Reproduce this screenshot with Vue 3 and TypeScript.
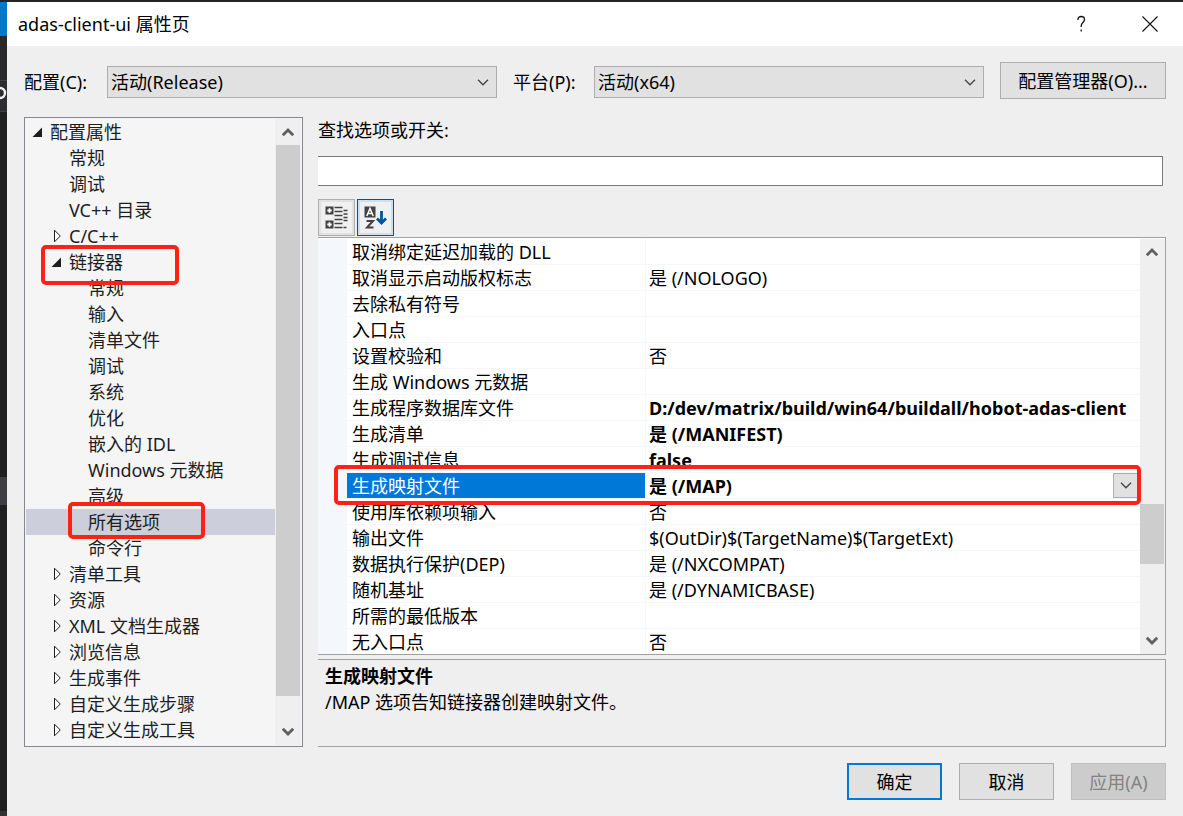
<script setup lang="ts">
import { ref } from 'vue'

interface TreeNode {
  label: string
  level: 0 | 1 | 2
  state?: 'open' | 'closed'
  marked?: 'wide' | 'inset'
}

interface Option {
  name: string
  value?: string
  changed?: boolean
}

const nodes: TreeNode[] = [
  { label: '配置属性', level: 0, state: 'open' },
  { label: '常规', level: 1 },
  { label: '调试', level: 1 },
  { label: 'VC++ 目录', level: 1 },
  { label: 'C/C++', level: 1, state: 'closed' },
  { label: '链接器', level: 1, state: 'open', marked: 'wide' },
  { label: '常规', level: 2 },
  { label: '输入', level: 2 },
  { label: '清单文件', level: 2 },
  { label: '调试', level: 2 },
  { label: '系统', level: 2 },
  { label: '优化', level: 2 },
  { label: '嵌入的 IDL', level: 2 },
  { label: 'Windows 元数据', level: 2 },
  { label: '高级', level: 2 },
  { label: '所有选项', level: 2, marked: 'inset' },
  { label: '命令行', level: 2 },
  { label: '清单工具', level: 1, state: 'closed' },
  { label: '资源', level: 1, state: 'closed' },
  { label: 'XML 文档生成器', level: 1, state: 'closed' },
  { label: '浏览信息', level: 1, state: 'closed' },
  { label: '生成事件', level: 1, state: 'closed' },
  { label: '自定义生成步骤', level: 1, state: 'closed' },
  { label: '自定义生成工具', level: 1, state: 'closed' },
]

const options: Option[] = [
  { name: '取消绑定延迟加载的 DLL' },
  { name: '取消显示启动版权标志', value: '是 (/NOLOGO)' },
  { name: '去除私有符号' },
  { name: '入口点' },
  { name: '设置校验和', value: '否' },
  { name: '生成 Windows 元数据' },
  { name: '生成程序数据库文件', value: 'D:/dev/matrix/build/win64/buildall/hobot-adas-client', changed: true },
  { name: '生成清单', value: '是 (/MANIFEST)', changed: true },
  { name: '生成调试信息', value: 'false', changed: true },
  { name: '生成映射文件', value: '是 (/MAP)', changed: true },
  { name: '使用库依赖项输入', value: '否' },
  { name: '输出文件', value: '$(OutDir)$(TargetName)$(TargetExt)' },
  { name: '数据执行保护(DEP)', value: '是 (/NXCOMPAT)' },
  { name: '随机基址', value: '是 (/DYNAMICBASE)' },
  { name: '所需的最低版本' },
  { name: '无入口点', value: '否' },
]

const activeNode = ref(15)
const activeOption = ref(9)
const config = ref('活动(Release)')
const platform = ref('活动(x64)')
const query = ref('')
</script>

<template>
  <div class="desktop">
    <div class="backdrop" aria-hidden="true">
      <i class="seg accent"></i>
      <i class="seg tabs"></i>
      <i class="seg word">
        <svg width="7" height="16" viewBox="0 0 7 16"><circle cx="0" cy="8" r="5" fill="none" stroke="#f1f1f1" stroke-width="2.4" /></svg>
      </i>
      <i class="seg upper"></i>
      <i class="seg handle"></i>
      <i class="seg lower"></i>
    </div>

    <main class="dialog">
      <header class="titlebar">
        <h1>adas-client-ui 属性页</h1>
        <button type="button" class="caption" aria-label="帮助">
          <svg width="16" height="18" viewBox="0 0 16 18"><path d="M4 5V4C4 2.500 5.300 1.500 7.200 1.500s3.300 1 3.300 3c0 3-3.300 3.200-3.300 6.500v1M7.200 14.500v2" fill="none" stroke="#111" stroke-width="1.300" /></svg>
        </button>
        <button type="button" class="caption" aria-label="关闭">
          <svg width="16" height="16" viewBox="0 0 16 16"><path d="M.5.5l15 15M15.500.5l-15 15" stroke="#111" stroke-width="1.100" /></svg>
        </button>
      </header>

      <div class="content">
        <div class="config-row">
          <label class="config-label" for="config">配置(C):</label>
          <div class="combo">
            <select id="config" v-model="config"><option>活动(Release)</option></select>
            <svg class="chevron" width="12" height="7" viewBox="0 0 12 7"><path d="M1 .8l5 5 5-5" fill="none" stroke="#444" stroke-width="1.3" /></svg>
          </div>
          <label class="config-label second" for="platform">平台(P):</label>
          <div class="combo">
            <select id="platform" v-model="platform"><option>活动(x64)</option></select>
            <svg class="chevron" width="12" height="7" viewBox="0 0 12 7"><path d="M1 .8l5 5 5-5" fill="none" stroke="#444" stroke-width="1.3" /></svg>
          </div>
          <button type="button" class="btn manager">配置管理器(O)...</button>
        </div>

        <div class="panes">
          <nav class="tree">
            <ul>
              <li
                v-for="(node, i) in nodes"
                :key="i"
                :class="['node', `level-${node.level}`, { active: i === activeNode }]"
                @click="activeNode = i"
              >
                <span class="toggle">
                  <svg v-if="node.state === 'open'" width="14" height="14" viewBox="0 0 14 14"><path d="M11 2.500V12H1.500z" fill="#1e1e1e" /></svg>
                  <svg v-else-if="node.state === 'closed'" width="14" height="14" viewBox="0 0 14 14"><path d="M4.500 1.200v11.600L10.300 7z" fill="#fff" stroke="#1e1e1e" /></svg>
                </span>
                <span>{{ node.label }}</span>
                <span v-if="node.marked" :class="['mark', node.marked]"></span>
              </li>
            </ul>
            <div class="scroll tree-scroll">
              <button type="button" class="step" aria-label="向上滚动">
                <svg width="12" height="10" viewBox="0 0 12 10"><path d="M.8 8.200L6 3l5.200 5.200" fill="none" stroke="#606060" stroke-width="2.800" /></svg>
              </button>
              <div class="track tree-track"><div class="thumb"></div></div>
              <button type="button" class="step" aria-label="向下滚动">
                <svg width="12" height="10" viewBox="0 0 12 10"><path d="M.8 1.800L6 7l5.200-5.200" fill="none" stroke="#606060" stroke-width="2.800" /></svg>
              </button>
            </div>
          </nav>

          <section class="details">
            <label class="search-label" for="search">查找选项或开关:</label>
            <input id="search" v-model="query" class="search" type="text" />

            <div class="toolbar">
              <button type="button" class="tool" aria-label="按类别">
                <svg width="24" height="24" viewBox="0 0 24 24">
                  <path d="M.5.5h8v8h-8zM.5 14.500h8v8h-8z" fill="#424242" />
                  <path d="M4.500 2.300v4.400M2.300 4.500h4.400M4.500 16.300v4.400M2.300 18.500h4.400" stroke="#fff" stroke-width="1.800" />
                  <path d="M9.500 1.500h8M9.500 5.500h8M9.500 9.500h8M9.500 13.500h8M9.500 17.500h8M9.500 21.500h8M18.500 4.500h4M18.500 8h4M18.500 11.500h4M18.500 14.500h4M18.500 21.500h3" stroke="#424242" stroke-width="1.500" />
                </svg>
              </button>
              <button type="button" class="tool pressed" aria-label="按字母顺序">
                <svg width="24" height="24" viewBox="0 0 24 24">
                  <path d="M.5.5h11v11H.5z" fill="#424242" />
                  <path d="M2.800 10L6 2.500 9.200 10M4 7.500h4" fill="none" stroke="#fff" stroke-width="1.500" />
                  <path d="M2.500 15h6.500L3 21.500h6.500" fill="none" stroke="#424242" stroke-width="2" />
                  <path d="M17.500 5v12M13 12.500l4.500 4.500 4.500-4.500" fill="none" stroke="#00539c" stroke-width="2.800" />
                </svg>
              </button>
            </div>

            <div class="grid">
              <table>
                <colgroup><col class="gutter-col" /><col class="name-col" /><col /></colgroup>
                <tbody>
                  <tr
                    v-for="(option, i) in options"
                    :key="option.name"
                    :class="{ active: i === activeOption }"
                    @click="activeOption = i"
                  >
                    <td class="gutter"><span v-if="i === 9" class="mark row-mark"></span></td>
                    <th scope="row"><span class="cell-text">{{ option.name }}</span></th>
                    <td :class="['value', { changed: option.changed }]">
                      <div class="cell">
                        <span class="cell-text">{{ option.value }}</span>
                        <button v-if="i === activeOption" type="button" class="drop" aria-label="打开选项">
                          <svg width="12" height="7" viewBox="0 0 12 7"><path d="M1 .8l5 5 5-5" fill="none" stroke="#444" stroke-width="1.3" /></svg>
                        </button>
                      </div>
                    </td>
                  </tr>
                </tbody>
              </table>
              <div class="scroll grid-scroll">
                <button type="button" class="step" aria-label="向上滚动">
                  <svg width="12" height="10" viewBox="0 0 12 10"><path d="M.8 8.200L6 3l5.200 5.200" fill="none" stroke="#606060" stroke-width="2.800" /></svg>
                </button>
                <div class="track grid-track"><div class="thumb"></div></div>
                <button type="button" class="step" aria-label="向下滚动">
                  <svg width="12" height="10" viewBox="0 0 12 10"><path d="M.8 1.800L6 7l5.200-5.200" fill="none" stroke="#606060" stroke-width="2.800" /></svg>
                </button>
              </div>
            </div>

            <div class="help">
              <h2>生成映射文件</h2>
              <p>/MAP 选项告知链接器创建映射文件。</p>
            </div>
          </section>
        </div>

        <footer class="actions">
          <button type="button" class="btn primary">确定</button>
          <button type="button" class="btn">取消</button>
          <button type="button" class="btn" disabled>应用(A)</button>
        </footer>
      </div>
    </main>
  </div>
</template>

<style>
body {
  margin: 0;
  background: #efefef;
}
</style>

<style scoped>
* {
  box-sizing: border-box;
}
.desktop {
  display: flex;
  min-height: 100vh;
  padding-top: 2px;
  background: #252526;
  color: #000;
  font: 18px/26px "Noto Sans", "Noto Sans CJK SC", sans-serif;
}
button,
select,
input {
  margin: 0;
  font: inherit;
  color: inherit;
  border-radius: 0;
}
svg {
  display: block;
}
h1,
h2,
p,
ul {
  margin: 0;
  padding: 0;
  font-size: 18px;
  font-weight: 400;
}

.backdrop {
  display: flex;
  flex-direction: column;
  flex: 0 0 7px;
  overflow: hidden;
}
.seg {
  display: block;
}
.accent {
  height: 34px;
  background: #0078cc;
}
.tabs {
  height: 44px;
  background: #29292c;
}
.word {
  height: 32px;
  padding-top: 4px;
  background: #2d2d30;
  border-top: 1px solid #3f3f46;
  border-bottom: 1px solid #3f3f46;
}
.upper {
  flex: 368;
  background: #1f1f1f;
}
.handle {
  flex: 28;
  background: #3e3e42;
}
.lower {
  flex: 308;
  background: #1f1f1f;
  border-bottom: 5px solid #333337;
}

.dialog {
  display: flex;
  flex-direction: column;
  flex: 1;
  min-width: 0;
  background: #efefef;
}
.titlebar {
  display: flex;
  align-items: center;
  height: 44px;
  padding-left: 11px;
  background: #fff;
}
.titlebar h1 {
  flex: 1;
}
.caption {
  display: grid;
  place-items: center;
  width: 70px;
  height: 44px;
  padding: 0;
  border: 0;
  background: none;
}
.caption:last-child {
  width: 66px;
}

.content {
  display: flex;
  flex-direction: column;
  flex: 1;
  padding: 16px 17px;
}
.config-row {
  display: flex;
  align-items: flex-end;
}
.config-label {
  flex: 0 0 83px;
  line-height: 34px;
}
.second {
  padding-left: 16px;
  flex-basis: 97px;
}
.combo {
  display: grid;
  flex: 1;
  align-items: center;
  height: 34px;
}
.combo > * {
  grid-area: 1 / 1;
}
.combo select {
  width: 100%;
  height: 32px;
  padding: 0 28px 0 3px;
  border: 1px solid #adadad;
  background: #e1e1e1;
  appearance: none;
}
.chevron {
  justify-self: end;
  margin-right: 8px;
  pointer-events: none;
}
.btn {
  width: 95px;
  height: 37px;
  padding: 0;
  border: 1px solid #adadad;
  background: #e1e1e1;
}
.manager {
  width: 166px;
  margin-left: 16px;
}
.primary {
  border: 2px solid #0078d7;
}
.btn:disabled {
  border-color: #bfbfbf;
  background: #ccc;
  color: #838383;
}

.panes {
  display: flex;
  flex: 1;
  gap: 15px;
  margin: 18px 0 16px;
}
.tree {
  display: flex;
  flex: 0 0 279px;
  padding: 1px;
  border: 1px solid #828790;
  background: #f5f5f5;
  color: #1e1e1e;
}
.tree ul {
  flex: 1;
  list-style: none;
}
.node {
  position: relative;
  display: flex;
  height: 26px;
  white-space: nowrap;
  cursor: default;
}
.node.active {
  background: #cccedb;
}
.level-0 {
  padding-left: 5px;
}
.level-1 {
  padding-left: 24px;
}
.level-2 {
  padding-left: 43px;
}
.toggle {
  display: flex;
  align-items: center;
  flex: 0 0 19px;
}
.mark {
  position: absolute;
  z-index: 2;
  border: 4px solid #ff2114;
  border-radius: 5px;
  pointer-events: none;
}
.wide {
  top: -4px;
  left: 15px;
  width: 138px;
  height: 40px;
}
.inset {
  top: -7px;
  left: 42px;
  width: 137px;
  height: 37px;
}

.scroll {
  display: flex;
  flex-direction: column;
  background: #efefef;
}
.tree-scroll {
  flex: 0 0 26px;
  padding: 0 1px;
}
.grid-scroll {
  flex: 0 0 25px;
}
.step {
  display: grid;
  place-items: center;
  width: 24px;
  height: 26px;
  padding: 0;
  border: 0;
  background: none;
}
.track {
  display: flex;
  flex-direction: column;
  flex: 1;
}
.thumb {
  width: 24px;
  background: #cdcdcd;
}
.tree-track .thumb {
  flex: 0 0 96%;
}
.grid-track {
  justify-content: flex-end;
  padding-bottom: 64px;
}
.grid-track .thumb {
  height: 60px;
}

.details {
  display: flex;
  flex-direction: column;
  flex: 1;
  min-width: 0;
}
.search-label {
  height: 39px;
}
.search {
  height: 30px;
  margin-right: 3px;
  padding: 0 4px;
  border: 1px solid #7a7a7a;
  border-left: 0;
  background: #fff;
}
.toolbar {
  display: flex;
  gap: 2px;
  padding: 13px 0 1px;
}
.tool {
  display: grid;
  place-items: center;
  width: 37px;
  height: 37px;
  padding: 0;
  border: 1px solid #adadad;
  background: #f0f0f0;
  box-shadow: inset 0 0 0 2px #e1e1e1;
}
.pressed {
  border-color: #00539c;
  box-shadow: inset 0 0 0 2px #cce0f2;
}

.grid {
  display: flex;
  padding-top: 1px;
  border: 1px solid #a0a0a0;
  border-left: 0;
  background: #fff;
}
table {
  flex: 1;
  min-width: 0;
  width: 100%;
  table-layout: fixed;
  border-spacing: 0;
}
.gutter-col {
  width: 29px;
}
.name-col {
  width: 299px;
}
tr {
  position: relative;
}
td,
th {
  height: 26px;
  padding: 0;
  text-align: left;
  white-space: nowrap;
  font-weight: 400;
  border-bottom: 1px solid #f4f7fc;
}
tr:last-child td,
tr:last-child th {
  height: 25px;
  border-bottom: 0;
}
.gutter {
  background: #f4f7fc;
}
th {
  padding-left: 5px;
  border-right: 1px solid #f4f7fc;
}
.active th {
  background: #0078d7;
  background-clip: padding-box;
  color: #fff;
}
.value {
  padding-left: 3px;
}
.changed {
  font-weight: 700;
}
.cell {
  display: flex;
  height: 25px;
}
.cell-text {
  display: block;
  flex: 1;
  height: 25px;
  padding-top: 2px;
  line-height: 23px;
  overflow: hidden;
}
.drop {
  display: grid;
  place-items: center;
  width: 25px;
  height: 25px;
  margin-right: 2px;
  padding: 0;
  border: 1px solid #adadad;
  background: #e1e1e1;
}
.row-mark {
  top: -8px;
  left: 16px;
  right: -1px;
  height: 40px;
}

.help {
  flex: 1;
  margin-top: 4px;
  padding: 3px 7px;
  border: 1px solid #a0a0a0;
  border-left: 0;
}
.help h2 {
  font-weight: 700;
}
.actions {
  display: flex;
  justify-content: flex-end;
  gap: 17px;
}
</style>
